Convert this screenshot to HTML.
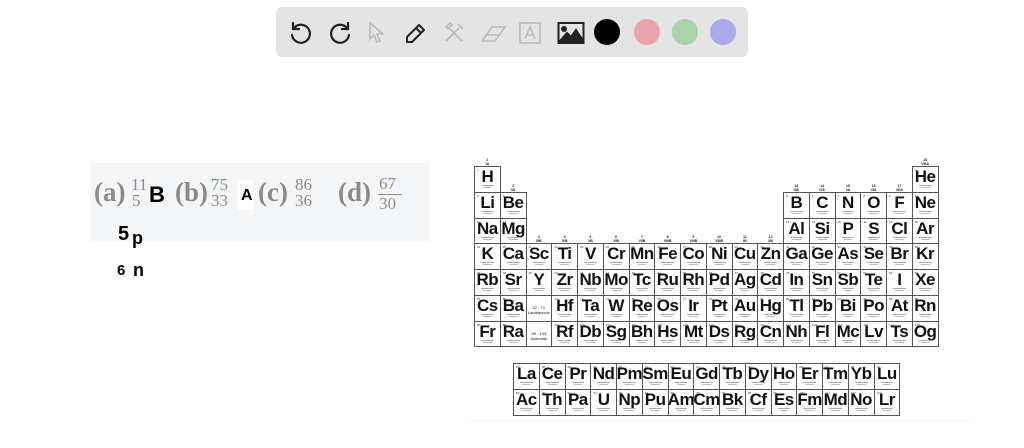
<!DOCTYPE html>
<html><head><meta charset="utf-8">
<style>
*{margin:0;padding:0;box-sizing:border-box}
body{width:1024px;height:448px;background:#fff;position:relative;overflow:hidden;font-family:"Liberation Sans",sans-serif}
.tb{position:absolute;left:276px;top:7px;width:472px;height:50px;background:#e4e4e4;border-radius:6px}
.tb svg{position:absolute}
.dot{position:absolute;top:12px;width:26px;height:26px;border-radius:50%}
.q{position:absolute;font-family:"Liberation Serif",serif;font-weight:bold;color:#8b8b8b;font-size:27px}
.s{position:absolute;font-family:"Liberation Serif",serif;color:#8b8b8b;font-size:17px;line-height:16px}
.h{position:absolute;font-family:"Liberation Sans",sans-serif;font-weight:bold;color:#000}
.g{position:absolute;display:grid;grid-template-columns:repeat(18,25.75px);grid-auto-rows:25.75px}
.g2{grid-template-columns:repeat(15,25.75px)}
.c{position:relative;border:1px solid #555;margin:0 -1px -1px 0;background:#fff}
.e{border:none;background:transparent}
.c i{position:absolute;left:2px;top:1px;font-style:normal;font-size:3px;color:#333}
.c b{position:absolute;left:-3px;right:-3px;top:1px;text-align:center;font-size:17px;line-height:17px;color:#111;letter-spacing:-0.5px}
.c u{position:absolute;left:6px;right:6px;top:18px;height:1px;background:#aaa}
.c u:after{content:"";position:absolute;left:2px;right:2px;top:2px;height:1px;background:#bbb}
.c em{position:absolute;left:0;right:0;top:-9px;text-align:center;font-style:normal;font-size:3.5px;line-height:4px;color:#222;font-weight:bold}
.c.t b{font-size:4px;top:9px;font-weight:normal;line-height:5px;letter-spacing:0}
</style></head><body>

<div class="tb">
<svg style="left:12px;top:13px" width="26" height="26" viewBox="0 0 26 26" fill="none" stroke="#222" stroke-width="2.2" stroke-linecap="round"><path d="M6 8 A9 9 0 1 1 4 15"/><path d="M5 3 L5 9 L11 9"/></svg>
<svg style="left:51px;top:13px" width="26" height="26" viewBox="0 0 26 26" fill="none" stroke="#222" stroke-width="2.2" stroke-linecap="round"><path d="M20 8 A9 9 0 1 0 22 15"/><path d="M21 3 L21 9 L15 9"/></svg>
<svg style="left:90px;top:13px" width="22" height="26" viewBox="0 0 22 26" fill="none" stroke="#bbb" stroke-width="1.6"><path d="M4 3 L4 19 L8 15 L11 22 L14 21 L11 14 L17 14 Z"/></svg>
<svg style="left:128px;top:14px" width="24" height="24" viewBox="0 0 24 24" fill="none" stroke="#222" stroke-width="2" stroke-linejoin="round"><path d="M3 21 L3 16 L15 4 L20 9 L8 21 Z M12 7 L17 12"/></svg>
<svg style="left:166px;top:14px" width="24" height="24" viewBox="0 0 24 24" fill="none" stroke="#bbb" stroke-width="1.6"><path d="M4 20 L17 7 M20 20 L7 7 M4 6 L8 2 L10 4 L6 8Z M16 3 L21 8"/></svg>
<svg style="left:203px;top:14px" width="28" height="24" viewBox="0 0 28 24" fill="none" stroke="#bbb" stroke-width="1.6"><path d="M3 20 L13 6 L26 6 L16 20 Z M7 14 L20 14"/></svg>
<svg style="left:242px;top:14px" width="24" height="24" viewBox="0 0 24 24" fill="none" stroke="#bbb" stroke-width="1.6"><rect x="2" y="2" width="20" height="20"/><path d="M7 18 L12 6 L17 18 M9 14 L15 14"/></svg>
<svg style="left:281px;top:14px" width="28" height="24" viewBox="0 0 28 24" fill="none" stroke="#222" stroke-width="2"><rect x="1.5" y="2" width="25" height="20"/><circle cx="7" cy="8" r="2" fill="#222"/><path d="M3 20 L10 12 L14 16 L19 9 L25 18 L25 20 Z" fill="#222"/></svg>
<div class="dot" style="left:318px;background:#000"></div>
<div class="dot" style="left:358px;background:#e9a4ab"></div>
<div class="dot" style="left:396px;background:#aad4a8"></div>
<div class="dot" style="left:434px;background:#aba8ec"></div>
</div>

<div style="position:absolute;left:90px;top:163px;width:340px;height:78px;background:#f4f5f7"></div>
<div style="position:absolute;left:238px;top:180px;width:16px;height:30px;background:#fff"></div>
<div class="q" style="left:94px;top:177px">(a)</div>
<div class="s" style="left:131px;top:177px">11</div>
<div class="s" style="left:132px;top:193px">5</div>
<div class="h" style="left:149px;top:182px;font-size:22px">B</div>
<div class="q" style="left:175px;top:177px">(b)</div>
<div class="s" style="left:211px;top:177px">75</div>
<div class="s" style="left:211px;top:193px">33</div>
<div class="h" style="left:241px;top:187px;font-size:16px">A</div>
<div class="q" style="left:258px;top:177px">(c)</div>
<div class="s" style="left:295px;top:177px">86</div>
<div class="s" style="left:295px;top:193px">36</div>
<div class="q" style="left:338px;top:177px">(d)</div>
<div class="s" style="left:379px;top:176px">67</div>
<div style="position:absolute;left:378px;top:194px;width:24px;height:1px;background:#8b8b8b"></div>
<div class="s" style="left:379px;top:196px">30</div>
<div class="h" style="left:118px;top:223px;font-size:20px">5</div>
<div class="h" style="left:132px;top:228px;font-size:18px">p</div>
<div class="h" style="left:117px;top:262px;font-size:15px">6</div>
<div class="h" style="left:133px;top:260px;font-size:18px">n</div>

<div class="g" style="left:474px;top:166px">
<div class="c"><em>1<br>IA</em><i>1</i><b>H</b><u></u></div><div class="c e" style="grid-column:span 16"></div><div class="c"><em>18<br>VIIIA</em><i>2</i><b>He</b><u></u></div>
<div class="c"><i>3</i><b>Li</b><u></u></div><div class="c"><em>2<br>IIA</em><i>4</i><b>Be</b><u></u></div><div class="c e" style="grid-column:span 10"></div><div class="c"><em>13<br>IIIA</em><i>5</i><b>B</b><u></u></div><div class="c"><em>14<br>IVA</em><i>6</i><b>C</b><u></u></div><div class="c"><em>15<br>VA</em><i>7</i><b>N</b><u></u></div><div class="c"><em>16<br>VIA</em><i>8</i><b>O</b><u></u></div><div class="c"><em>17<br>VIIA</em><i>9</i><b>F</b><u></u></div><div class="c"><i>10</i><b>Ne</b><u></u></div>
<div class="c"><i>11</i><b>Na</b><u></u></div><div class="c"><i>12</i><b>Mg</b><u></u></div><div class="c e" style="grid-column:span 10"></div><div class="c"><i>13</i><b>Al</b><u></u></div><div class="c"><i>14</i><b>Si</b><u></u></div><div class="c"><i>15</i><b>P</b><u></u></div><div class="c"><i>16</i><b>S</b><u></u></div><div class="c"><i>17</i><b>Cl</b><u></u></div><div class="c"><i>18</i><b>Ar</b><u></u></div>
<div class="c"><i>19</i><b>K</b><u></u></div><div class="c"><i>20</i><b>Ca</b><u></u></div><div class="c"><em>3<br>IIIB</em><i>21</i><b>Sc</b><u></u></div><div class="c"><em>4<br>IVB</em><i>22</i><b>Ti</b><u></u></div><div class="c"><em>5<br>VB</em><i>23</i><b>V</b><u></u></div><div class="c"><em>6<br>VIB</em><i>24</i><b>Cr</b><u></u></div><div class="c"><em>7<br>VIIB</em><i>25</i><b>Mn</b><u></u></div><div class="c"><em>8<br>VIIIB</em><i>26</i><b>Fe</b><u></u></div><div class="c"><em>9<br>VIIIB</em><i>27</i><b>Co</b><u></u></div><div class="c"><em>10<br>VIIIB</em><i>28</i><b>Ni</b><u></u></div><div class="c"><em>11<br>IB</em><i>29</i><b>Cu</b><u></u></div><div class="c"><em>12<br>IIB</em><i>30</i><b>Zn</b><u></u></div><div class="c"><i>31</i><b>Ga</b><u></u></div><div class="c"><i>32</i><b>Ge</b><u></u></div><div class="c"><i>33</i><b>As</b><u></u></div><div class="c"><i>34</i><b>Se</b><u></u></div><div class="c"><i>35</i><b>Br</b><u></u></div><div class="c"><i>36</i><b>Kr</b><u></u></div>
<div class="c"><i>37</i><b>Rb</b><u></u></div><div class="c"><i>38</i><b>Sr</b><u></u></div><div class="c"><i>39</i><b>Y</b><u></u></div><div class="c"><i>40</i><b>Zr</b><u></u></div><div class="c"><i>41</i><b>Nb</b><u></u></div><div class="c"><i>42</i><b>Mo</b><u></u></div><div class="c"><i>43</i><b>Tc</b><u></u></div><div class="c"><i>44</i><b>Ru</b><u></u></div><div class="c"><i>45</i><b>Rh</b><u></u></div><div class="c"><i>46</i><b>Pd</b><u></u></div><div class="c"><i>47</i><b>Ag</b><u></u></div><div class="c"><i>48</i><b>Cd</b><u></u></div><div class="c"><i>49</i><b>In</b><u></u></div><div class="c"><i>50</i><b>Sn</b><u></u></div><div class="c"><i>51</i><b>Sb</b><u></u></div><div class="c"><i>52</i><b>Te</b><u></u></div><div class="c"><i>53</i><b>I</b><u></u></div><div class="c"><i>54</i><b>Xe</b><u></u></div>
<div class="c"><i>55</i><b>Cs</b><u></u></div><div class="c"><i>56</i><b>Ba</b><u></u></div><div class="c t"><b>57 - 71<br>Lanthanoids</b></div><div class="c"><i>72</i><b>Hf</b><u></u></div><div class="c"><i>73</i><b>Ta</b><u></u></div><div class="c"><i>74</i><b>W</b><u></u></div><div class="c"><i>75</i><b>Re</b><u></u></div><div class="c"><i>76</i><b>Os</b><u></u></div><div class="c"><i>77</i><b>Ir</b><u></u></div><div class="c"><i>78</i><b>Pt</b><u></u></div><div class="c"><i>79</i><b>Au</b><u></u></div><div class="c"><i>80</i><b>Hg</b><u></u></div><div class="c"><i>81</i><b>Tl</b><u></u></div><div class="c"><i>82</i><b>Pb</b><u></u></div><div class="c"><i>83</i><b>Bi</b><u></u></div><div class="c"><i>84</i><b>Po</b><u></u></div><div class="c"><i>85</i><b>At</b><u></u></div><div class="c"><i>86</i><b>Rn</b><u></u></div>
<div class="c"><i>87</i><b>Fr</b><u></u></div><div class="c"><i>88</i><b>Ra</b><u></u></div><div class="c t"><b>89 - 103<br>Actinoids</b></div><div class="c"><i>104</i><b>Rf</b><u></u></div><div class="c"><i>105</i><b>Db</b><u></u></div><div class="c"><i>106</i><b>Sg</b><u></u></div><div class="c"><i>107</i><b>Bh</b><u></u></div><div class="c"><i>108</i><b>Hs</b><u></u></div><div class="c"><i>109</i><b>Mt</b><u></u></div><div class="c"><i>110</i><b>Ds</b><u></u></div><div class="c"><i>111</i><b>Rg</b><u></u></div><div class="c"><i>112</i><b>Cn</b><u></u></div><div class="c"><i>113</i><b>Nh</b><u></u></div><div class="c"><i>114</i><b>Fl</b><u></u></div><div class="c"><i>115</i><b>Mc</b><u></u></div><div class="c"><i>116</i><b>Lv</b><u></u></div><div class="c"><i>117</i><b>Ts</b><u></u></div><div class="c"><i>118</i><b>Og</b><u></u></div>
</div>

<div class="g g2" style="left:513px;top:363px">
<div class="c"><i>57</i><b>La</b><u></u></div><div class="c"><i>58</i><b>Ce</b><u></u></div><div class="c"><i>59</i><b>Pr</b><u></u></div><div class="c"><i>60</i><b>Nd</b><u></u></div><div class="c"><i>61</i><b>Pm</b><u></u></div><div class="c"><i>62</i><b>Sm</b><u></u></div><div class="c"><i>63</i><b>Eu</b><u></u></div><div class="c"><i>64</i><b>Gd</b><u></u></div><div class="c"><i>65</i><b>Tb</b><u></u></div><div class="c"><i>66</i><b>Dy</b><u></u></div><div class="c"><i>67</i><b>Ho</b><u></u></div><div class="c"><i>68</i><b>Er</b><u></u></div><div class="c"><i>69</i><b>Tm</b><u></u></div><div class="c"><i>70</i><b>Yb</b><u></u></div><div class="c"><i>71</i><b>Lu</b><u></u></div>
<div class="c"><i>89</i><b>Ac</b><u></u></div><div class="c"><i>90</i><b>Th</b><u></u></div><div class="c"><i>91</i><b>Pa</b><u></u></div><div class="c"><i>92</i><b>U</b><u></u></div><div class="c"><i>93</i><b>Np</b><u></u></div><div class="c"><i>94</i><b>Pu</b><u></u></div><div class="c"><i>95</i><b>Am</b><u></u></div><div class="c"><i>96</i><b>Cm</b><u></u></div><div class="c"><i>97</i><b>Bk</b><u></u></div><div class="c"><i>98</i><b>Cf</b><u></u></div><div class="c"><i>99</i><b>Es</b><u></u></div><div class="c"><i>100</i><b>Fm</b><u></u></div><div class="c"><i>101</i><b>Md</b><u></u></div><div class="c"><i>102</i><b>No</b><u></u></div><div class="c"><i>103</i><b>Lr</b><u></u></div>
</div>
<div style="position:absolute;left:470px;top:420px;width:500px;height:1px;background:#eee"></div>
</body></html>
